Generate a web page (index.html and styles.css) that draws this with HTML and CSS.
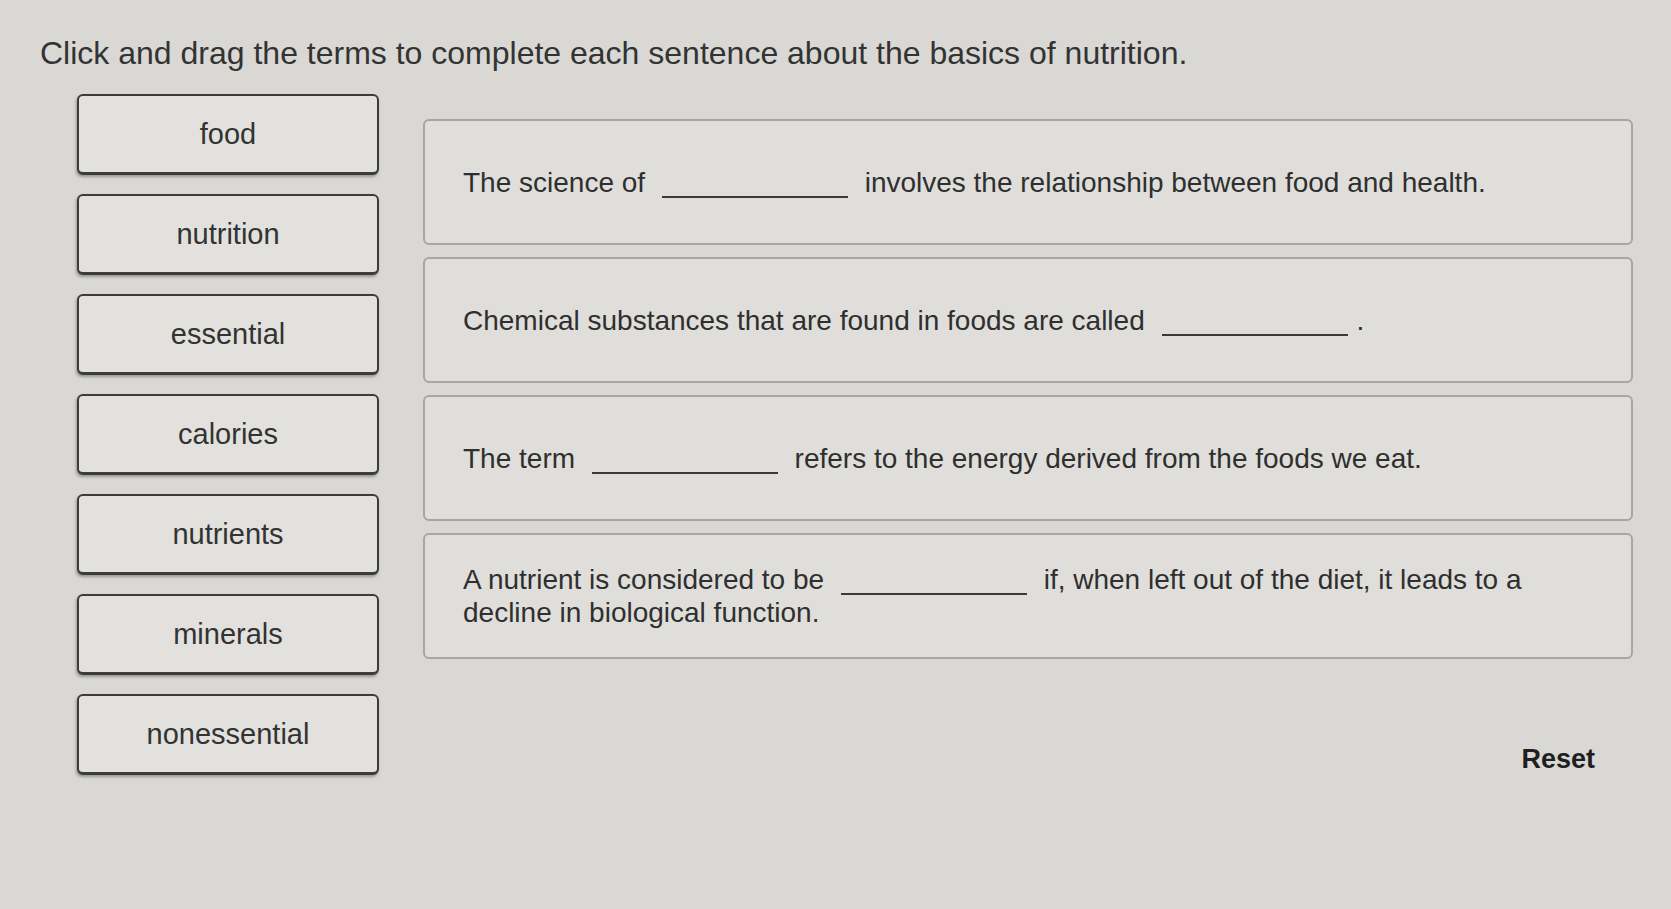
FILE: index.html
```html
<!DOCTYPE html>
<html>
<head>
<meta charset="utf-8">
<link rel="stylesheet" href="styles.css">
</head>
<body>
<div class="page">
  <h1 class="title">Click and drag the terms to complete each sentence about the basics of nutrition.</h1>
  <div class="workspace">
    <div class="terms">
      <div class="term">food</div>
      <div class="term">nutrition</div>
      <div class="term">essential</div>
      <div class="term">calories</div>
      <div class="term">nutrients</div>
      <div class="term">minerals</div>
      <div class="term">nonessential</div>
    </div>
    <div class="sentences">
      <div class="sentence"><p>The science of <span class="blank"></span> involves the relationship between food and health.</p></div>
      <div class="sentence"><p>Chemical substances that are found in foods are called <span class="blank"></span>.</p></div>
      <div class="sentence"><p>The term <span class="blank"></span> refers to the energy derived from the foods we eat.</p></div>
      <div class="sentence"><p>A nutrient is considered to be <span class="blank"></span> if, when left out of the diet, it leads to a<br>decline in biological function.</p></div>
      <div class="actions"><span class="reset">Reset</span></div>
    </div>
  </div>
</div>
</body>
</html>
```
FILE: styles.css
```css
html, body {
  margin: 0;
  padding: 0;
}
body {
  background: #d9d8d5;
  font-family: "Liberation Sans", Arial, Helvetica, sans-serif;
  color: #2f2f2f;
  width: 1671px;
  height: 909px;
  overflow: hidden;
}
.page {
  padding: 34px 0 0 40px;
}
.title {
  margin: 0;
  font-size: 32px;
  line-height: 38px;
  font-weight: normal;
  color: #333;
}
.workspace {
  display: flex;
  margin-top: 22px;
  align-items: flex-start;
}
.terms {
  display: flex;
  flex-direction: column;
  gap: 19px;
  margin-left: 37px;
  width: 302px;
}
.term {
  height: 81px;
  box-sizing: border-box;
  border: 2px solid #3c3c3c;
  border-bottom-width: 3px;
  border-radius: 6px;
  background: #e2e1de;
  box-shadow: -1px 2px 3px rgba(0, 0, 0, 0.3);
  display: flex;
  align-items: center;
  justify-content: center;
  font-size: 29px;
  color: #333;
}
.sentences {
  margin-left: 44px;
  margin-top: 25px;
  width: 1210px;
  display: flex;
  flex-direction: column;
  gap: 12px;
}
.sentence {
  height: 126px;
  box-sizing: border-box;
  border: 2px solid #a6a6a4;
  border-radius: 6px;
  background: #dfdedb;
  display: flex;
  align-items: center;
  padding: 0 38px;
}
.sentence p {
  margin: 0;
  font-size: 28px;
  line-height: 33px;
  color: #2f2f2f;
}
.blank {
  display: inline-block;
  width: 186px;
  height: 22px;
  border-bottom: 2px solid #3a3a3a;
  margin: 0 9px;
  vertical-align: -6px;
}
.actions {
  display: flex;
  justify-content: flex-end;
  padding-right: 38px;
  margin-top: 72px;
}
.reset {
  font-size: 27px;
  line-height: 32px;
  font-weight: bold;
  color: #1f1f1f;
}
```
